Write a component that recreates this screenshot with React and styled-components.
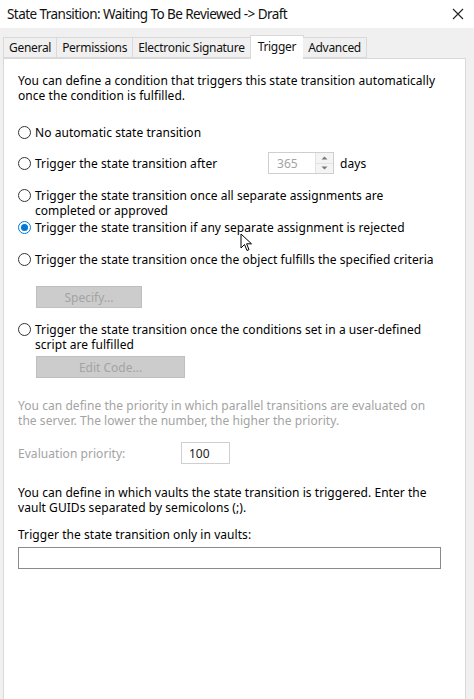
import React from 'react'
import styled, { createGlobalStyle } from 'styled-components'

const grey = '#f0f0f0'
const border = '#d9d9d9'
const disabled = '#a3a3a3'

const GlobalStyle = createGlobalStyle`
  html, body {
    margin: 0;
    padding: 0;
    background: ${grey};
  }
  body {
    font-family: 'Noto Sans', 'Open Sans', sans-serif;
    font-size: 12px;
    color: #000;
  }
`

const Window = styled.div`
  width: 474px;
  height: 699px;
  display: flex;
  flex-direction: column;
  overflow: hidden;
  position: relative;
`

const TitleBar = styled.div`
  height: 28px;
  flex: none;
  background: #fff;
  display: flex;
  align-items: center;
  justify-content: space-between;
  padding: 0 6px 0 7px;
`

const Title = styled.span`
  font-size: 13.5px;
  letter-spacing: -0.55px;
  color: #111;
`

const Close = styled.span`
  width: 16px;
  height: 16px;
  display: flex;
  align-items: center;
  justify-content: center;
  margin-right: 2px;
`

const Body = styled.div`
  flex: 1;
  display: flex;
  flex-direction: column;
  padding: 7px 8px 0 3px;
`

const TabStrip = styled.div`
  display: flex;
  align-items: flex-end;
  height: 24px;
  margin-bottom: -1px;
  position: relative;
  z-index: 1;
`

const Tab = styled.div`
  height: ${p => (p.$active ? '24px' : '21px')};
  padding: ${p => (p.$active ? '2px 7px 0' : '0 5px')};
  margin: ${p => (p.$active ? '0 -1px' : '0 0 1px')};
  background: ${p => (p.$active ? '#fff' : grey)};
  border: 1px solid ${border};
  border-bottom: ${p => (p.$active ? 'none' : `1px solid ${border}`)};
  border-left-width: ${p => (p.$first || p.$active ? '1px' : '0')};
  display: flex;
  align-items: ${p => (p.$active ? 'flex-start' : 'center')};
  font-size: 12px;
  letter-spacing: -0.3px;
  color: #111;
  box-sizing: border-box;
`

const Panel = styled.div`
  flex: 1;
  background: #fff;
  border: 1px solid ${border};
  border-bottom: none;
  padding: 14px 14px 0 14px;
  display: flex;
  flex-direction: column;
`

const Text = styled.p`
  margin: ${p => p.$gap || 0}px 0 0;
  font-size: 12px;
  line-height: 15px;
  letter-spacing: 0.05px;
  color: ${p => (p.$disabled ? disabled : '#000')};
`

const Options = styled.div`
  display: flex;
  flex-direction: column;
  margin-top: 10px;
`

const OptionRow = styled.label`
  display: flex;
  align-items: flex-start;
  margin-top: ${p => p.$gap || 0}px;
`

const Radio = styled.span`
  width: 13px;
  height: 13px;
  flex: none;
  box-sizing: border-box;
  border-radius: 50%;
  border: 1px solid ${p => (p.$checked ? '#0078d7' : '#333')};
  margin: 1px 4px 0 0;
  display: flex;
  align-items: center;
  justify-content: center;
  &::after {
    content: '';
    width: 7px;
    height: 7px;
    border-radius: 50%;
    background: ${p => (p.$checked ? '#0078d7' : 'transparent')};
  }
`

const OptionLabel = styled.span`
  font-size: 12px;
  line-height: 15px;
  letter-spacing: 0.05px;
  display: flex;
  align-items: center;
  flex-wrap: wrap;
`

const LabelText = styled.span`
  width: ${p => p.$width || 'auto'};
  flex: none;
`

const Spinner = styled.div`
  width: 66px;
  height: 22px;
  box-sizing: border-box;
  border: 1px solid #cfcfcf;
  background: #fff;
  display: flex;
  margin: -4px 6px -3px 0;
`

const SpinValue = styled.span`
  flex: 1;
  padding-left: 8px;
  color: ${disabled};
  display: flex;
  align-items: center;
`

const SpinButtons = styled.div`
  width: 17px;
  display: flex;
  flex-direction: column;
  border-left: 1px solid #e3e3e3;
  background: #f4f4f4;
`

const SpinHalf = styled.span`
  flex: 1;
  display: flex;
  align-items: center;
  justify-content: center;
  & + & {
    border-top: 1px solid #e3e3e3;
  }
`

const Indent = styled.div`
  padding-left: 18px;
  margin-top: ${p => p.$gap || 0}px;
`

const GreyButton = styled.div`
  width: ${p => p.$width}px;
  height: 22px;
  box-sizing: border-box;
  background: #cccccc;
  border: 1px solid #bfbfbf;
  color: ${disabled};
  display: flex;
  align-items: center;
  justify-content: center;
  font-size: 12px;
`

const PriorityRow = styled.div`
  display: flex;
  align-items: center;
  margin-top: 14px;
`

const PriorityLabel = styled(Text)`
  width: 163px;
`

const SmallInput = styled.div`
  width: 49px;
  height: 22px;
  box-sizing: border-box;
  border: 1px solid #cfcfcf;
  padding-left: 7px;
  display: flex;
  align-items: center;
  color: #222;
`

const VaultInput = styled.div`
  width: 423px;
  height: 22px;
  box-sizing: border-box;
  border: 1px solid #8a8a8a;
  margin-top: 5px;
`

const Cursor = styled.svg`
  position: absolute;
  left: 240px;
  top: 233px;
`

const Arrow = ({ up }) => (
  <svg width="7" height="4" viewBox="0 0 7 4">
    <path d={up ? 'M0.5 3.5 L3.5 0.5 L6.5 3.5 Z' : 'M0.5 0.5 L3.5 3.5 L6.5 0.5 Z'} fill="#777" />
  </svg>
)

export default function App() {
  return (
    <>
      <GlobalStyle />
      <Window>
        <TitleBar>
          <Title>State Transition: Waiting To Be Reviewed -&gt; Draft</Title>
          <Close>
            <svg width="12" height="12" viewBox="0 0 12 12">
              <path d="M1 1 L11 11 M11 1 L1 11" stroke="#222" strokeWidth="1.1" />
            </svg>
          </Close>
        </TitleBar>
        <Body>
          <TabStrip>
            <Tab $first>General</Tab>
            <Tab>Permissions</Tab>
            <Tab>Electronic Signature</Tab>
            <Tab $active>Trigger</Tab>
            <Tab>Advanced</Tab>
          </TabStrip>
          <Panel>
            <Text>
              You can define a condition that triggers this state transition automatically
              <br />
              once the condition is fulfilled.
            </Text>
            <Options>
              <OptionRow $gap={12}>
                <Radio />
                <OptionLabel>No automatic state transition</OptionLabel>
              </OptionRow>
              <OptionRow $gap={16}>
                <Radio />
                <OptionLabel>
                  <LabelText $width="233px">Trigger the state transition after</LabelText>
                  <Spinner>
                    <SpinValue>365</SpinValue>
                    <SpinButtons>
                      <SpinHalf><Arrow up /></SpinHalf>
                      <SpinHalf><Arrow /></SpinHalf>
                    </SpinButtons>
                  </Spinner>
                  days
                </OptionLabel>
              </OptionRow>
              <OptionRow $gap={17}>
                <Radio />
                <OptionLabel>
                  Trigger the state transition once all separate assignments are
                  <br />
                  completed or approved
                </OptionLabel>
              </OptionRow>
              <OptionRow $gap={2}>
                <Radio $checked />
                <OptionLabel>Trigger the state transition if any separate assignment is rejected</OptionLabel>
              </OptionRow>
              <OptionRow $gap={17}>
                <Radio />
                <OptionLabel>Trigger the state transition once the object fulfills the specified criteria</OptionLabel>
              </OptionRow>
              <Indent $gap={19}>
                <GreyButton $width={106}>Specify...</GreyButton>
              </Indent>
              <OptionRow $gap={14}>
                <Radio />
                <OptionLabel>
                  Trigger the state transition once the conditions set in a user-defined
                  <br />
                  script are fulfilled
                </OptionLabel>
              </OptionRow>
              <Indent $gap={4}>
                <GreyButton $width={149}>Edit Code...</GreyButton>
              </Indent>
            </Options>
            <Text $disabled $gap={20}>
              You can define the priority in which parallel transitions are evaluated on
              <br />
              the server. The lower the number, the higher the priority.
            </Text>
            <PriorityRow>
              <PriorityLabel $disabled>Evaluation priority:</PriorityLabel>
              <SmallInput>100</SmallInput>
            </PriorityRow>
            <Text $gap={21}>
              You can define in which vaults the state transition is triggered. Enter the
              <br />
              vault GUIDs separated by semicolons (;).
            </Text>
            <Text $gap={12}>Trigger the state transition only in vaults:</Text>
            <VaultInput />
          </Panel>
        </Body>
        <Cursor width="13" height="19" viewBox="0 0 13 19">
          <path d="M1 1 L1 15 L4.5 11.5 L7 17.5 L9 16.6 L6.6 10.8 L11.5 10.8 Z" fill="#fff" stroke="#000" strokeWidth="1" strokeLinejoin="round" />
        </Cursor>
      </Window>
    </>
  )
}
